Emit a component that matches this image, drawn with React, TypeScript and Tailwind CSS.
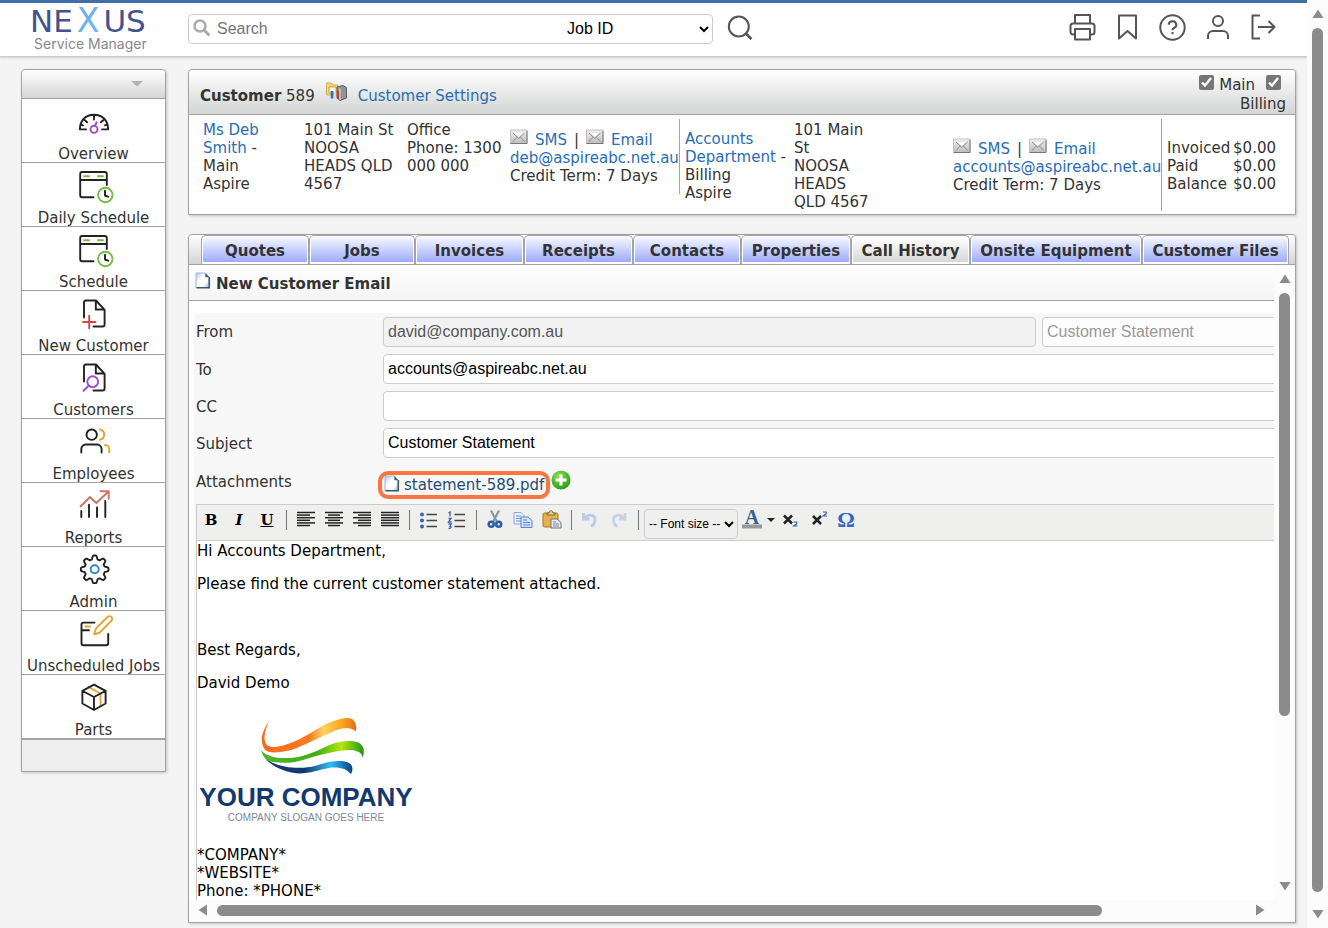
import type { ReactNode } from 'react';

const DARK = '#222';

function gearPath(cx: number, cy: number) {
  const points: string[] = [];
  for (let i = 0; i < 128; i++) {
    const a = (i / 128) * Math.PI * 2;
    const wave = Math.max(-1, Math.min(1, 1.7 * Math.cos(8 * a)));
    const r = 12 + 1.8 * wave;
    points.push(`${(cx + r * Math.cos(a)).toFixed(2)} ${(cy + r * Math.sin(a)).toFixed(2)}`);
  }
  return `M${points.join('L')}Z`;
}

function MenuSvg({ children }: { children: ReactNode }) {
  return (
    <svg aria-hidden="true" viewBox="0 0 36 40" className="h-10 w-9 overflow-visible" fill="none" stroke={DARK} strokeWidth="1.9" strokeLinecap="round" strokeLinejoin="round">
      {children}
    </svg>
  );
}

const scheduleIcon = (
  <MenuSvg>
    <path d="M17.5 31.3H6.2a2 2 0 0 1-2-2V8a2 2 0 0 1 2-2h22.6a2 2 0 0 1 2 2v11M4.2 14h26.6" />
    <path d="M8 10.2h5M22 10.2h5" stroke="#6fbf44" />
    <circle cx="29.3" cy="29" r="7.2" stroke="#6fbf44" />
    <path d="M29 24.8v4.7l3.2 1.2" />
  </MenuSvg>
);

const fileShape = 'M8 23.500V8.500a2 2 0 0 1 2-2H20L28.600 15.800V30.500a2 2 0 0 1-2 2H17.500M19.800 6.800V15.500H28.200';

const menu: { label: string; icon: ReactNode }[] = [
  {
    label: 'Overview',
    icon: (
      <MenuSvg>
        <path d="M10 27.400H3.900C3.900 18 10 12.700 18 12.700S32.100 18 32.100 27.400H26M18 13v4.500M8.500 18l2.600 2.300M27.500 18l-2.600 2.300M5 22.500l2 .8M31 22.500l-2 .8" />
        <circle cx="18" cy="27.300" r="3.500" stroke="#9c4fc4" />
        <path d="M19 23.800l1.600-3.600" stroke="#9c4fc4" />
      </MenuSvg>
    ),
  },
  { label: 'Daily Schedule', icon: scheduleIcon },
  { label: 'Schedule', icon: scheduleIcon },
  {
    label: 'New Customer',
    icon: (
      <MenuSvg>
        <path d={fileShape} />
        <path d="M7 28h12.500M13.200 21.700v12.500" stroke="#cf4a42" />
      </MenuSvg>
    ),
  },
  {
    label: 'Customers',
    icon: (
      <MenuSvg>
        <path d={fileShape} />
        <circle cx="16.700" cy="23.700" r="5.400" stroke="#9c4fc4" fill="#fff" />
        <path d="M12.700 27.800L7.500 32.800" stroke="#9c4fc4" />
      </MenuSvg>
    ),
  },
  {
    label: 'Employees',
    icon: (
      <MenuSvg>
        <circle cx="15.700" cy="12.700" r="5.200" />
        <path d="M5.300 30.500V27a4.500 4.500 0 0 1 4.500-4.500h11.300a4.500 4.500 0 0 1 4.500 4.500v3.500" />
        <path d="M24 7.500a5.200 5.200 0 0 1 0 10.200M29 23a4.600 4.600 0 0 1 4.300 4.500v3" stroke="#e5a52d" />
      </MenuSvg>
    ),
  },
  {
    label: 'Reports',
    icon: (
      <MenuSvg>
        <path d="M5.300 25v6M13 18.700V31M21 21.500V31M29.300 15v16" />
        <path d="M4.500 20.500L14 11l6.300 6L32.500 5.500M24.500 5.300h8.200v7.500" stroke="#cc7563" />
      </MenuSvg>
    ),
  },
  {
    label: 'Admin',
    icon: (
      <MenuSvg>
        <path d={gearPath(18.7, 19.3)} />
        <circle cx="18.700" cy="19.300" r="4" stroke="#2f86c9" />
      </MenuSvg>
    ),
  },
  {
    label: 'Unscheduled Jobs',
    icon: (
      <MenuSvg>
        <path d="M18.500 8.600H7.500a2 2 0 0 0-2 2V29.300a2 2 0 0 0 2 2h22.700a2 2 0 0 0 2-2V20M6 16.300h7" />
        <path d="M9.500 12.500h4.500M18.300 20.300l1.500-5.600L31.500 3a2.600 2.600 0 0 1 4 3.600L23.800 18.500z" stroke="#e5a52d" />
      </MenuSvg>
    ),
  },
  {
    label: 'Parts',
    icon: (
      <MenuSvg>
        <path d="M12.500 9L24.500 15.500V28" stroke="#e5a52d" />
        <path d="M18 6.600L29.600 12.800V25.500L18 32L6.400 25.500V12.800zM6.600 13L18 19L29.400 13M18 19v12.500" />
      </MenuSvg>
    ),
  },
];

const tabs = [
  { label: 'Quotes', size: 'basis-[108px]' },
  { label: 'Jobs', size: 'basis-[106px]' },
  { label: 'Invoices', size: 'basis-[109px]' },
  { label: 'Receipts', size: 'basis-[109px]' },
  { label: 'Contacts', size: 'basis-[108px]' },
  { label: 'Properties', size: 'basis-[110px]' },
  { label: 'Call History', size: 'basis-[119px]' },
  { label: 'Onsite Equipment', size: 'basis-[172px]' },
  { label: 'Customer Files', size: 'basis-[147px]' },
];

const linkClass = 'text-[#2a6db5]';
const card = 'border border-[#a3a3a3] shadow-[1px_1px_3px_rgba(0,0,0,0.2)]';

function Arrow({ dir }: { dir: 'up' | 'down' | 'left' | 'right' }) {
  const d = {
    up: 'M6 1.500L11.500 10H.5z',
    down: 'M6 10.500L11.500 2H.5z',
    left: 'M1.500 6L10 .5V11.500z',
    right: 'M10.500 6L2 .5V11.500z',
  }[dir];
  return (
    <svg aria-hidden="true" viewBox="0 0 12 12" className="size-3 shrink-0" fill="#8b8b8b">
      <path d={d} />
    </svg>
  );
}

function HeaderIcon({ label, children }: { label: string; children: ReactNode }) {
  return (
    <button type="button" aria-label={label} className="size-7">
      <svg viewBox="0 0 28 28" className="size-7" fill="none" stroke="#555" strokeWidth="2" strokeLinejoin="round">
        {children}
      </svg>
    </button>
  );
}

function Envelope() {
  return (
    <svg aria-hidden="true" viewBox="0 0 18 16" className="mt-[2px] h-4 w-[18px] shrink-0 self-start">
      <defs>
        <linearGradient id="envelope" x1="0" y1="0" x2="0" y2="1">
          <stop offset="0" stopColor="#f0f0f0" />
          <stop offset="1" stopColor="#bdbdbd" />
        </linearGradient>
      </defs>
      <rect x=".5" y="1" width="16.500" height="13.500" fill="url(#envelope)" stroke="#c2c2c2" />
      <path d="M.5 14.500h16.500V2" fill="none" stroke="#777" />
      <path d="M3 4l5.800 5.500L14.600 4M3 12.500l4-4.300M14.600 12.500l-4-4.300" fill="none" stroke="#8d8d8d" />
      <path d="M4.500 4l4.300 3.800L13 4z" fill="#fff" />
    </svg>
  );
}

function PageIcon() {
  return (
    <svg aria-hidden="true" viewBox="0 0 16 17" className="h-[17px] w-4 shrink-0">
      <defs>
        <linearGradient id="page" x1="0" y1="0" x2="1" y2="1">
          <stop offset="0" stopColor="#a9c3ee" />
          <stop offset=".4" stopColor="#fff" />
          <stop offset=".7" stopColor="#fff" />
          <stop offset="1" stopColor="#9fb2cc" />
        </linearGradient>
      </defs>
      <path d="M1 1h9.500L14 5v10.500H1z" fill="url(#page)" stroke="#9db4da" />
      <path d="M14.300 5v10.800H1.500" fill="none" stroke="#3b5578" strokeWidth="1.500" />
      <path d="M10.300 1v4.200h4z" fill="#3d587c" />
    </svg>
  );
}

function ContactLinks({ email }: { email: string }) {
  return (
    <div>
      <div className="flex h-[22px] items-end gap-[7px]">
        <Envelope />
        <a href="#sms" className={linkClass}>SMS</a>
        <span>|</span>
        <Envelope />
        <a href="#email" className={linkClass}>Email</a>
      </div>
      <a href="#address" className={linkClass}>{email}</a>
      <div>Credit Term: 7 Days</div>
    </div>
  );
}

function Tool({ label, children }: { label: string; children: ReactNode }) {
  return (
    <button type="button" aria-label={label} className="flex h-[30px] w-7 shrink-0 items-center justify-center">
      {children}
    </button>
  );
}

function ToolSvg({ children }: { children: ReactNode }) {
  return (
    <svg aria-hidden="true" viewBox="0 0 20 20" className="size-5 overflow-visible" fill="none">
      {children}
    </svg>
  );
}

function Separator() {
  return (
    <div className="flex h-[30px] w-[11px] shrink-0 items-center justify-center">
      <div className="h-5 w-px bg-[#777]" />
    </div>
  );
}

function AlignIcon({ starts, ends }: { starts: number[]; ends: number[] }) {
  return (
    <ToolSvg>
      {starts.map((x, i) => (
        <path key={i} d={`M${x} ${2.500 + i * 2.600}H${ends[i]}`} stroke="#222" strokeWidth="1.500" />
      ))}
    </ToolSvg>
  );
}

const inputClass = 'h-[30px] min-w-0 rounded border border-[#ccc] px-1 font-["Liberation_Sans",Arial,sans-serif] text-base';

function Field({ id, label, value }: { id: string; label: string; value: string }) {
  return (
    <div className="flex h-[37px] items-center">
      <label htmlFor={id} className="w-[187px] shrink-0 pt-[2px]">{label}</label>
      <input id={id} defaultValue={value} className={`${inputClass} flex-1 bg-white text-black`} />
    </div>
  );
}

function CompanyLogo() {
  return (
    <svg role="img" aria-label="Your Company" viewBox="0 0 220 120" className="h-[120px] w-[220px]">
      <defs>
        <linearGradient id="orange">
          <stop offset="0" stopColor="#f26a1b" />
          <stop offset=".5" stopColor="#fa7a20" />
          <stop offset=".65" stopColor="#ffd060" />
          <stop offset=".85" stopColor="#f7a51e" />
          <stop offset="1" stopColor="#ee6a16" />
        </linearGradient>
        <linearGradient id="green">
          <stop offset="0" stopColor="#4fb626" />
          <stop offset=".55" stopColor="#3fae16" />
          <stop offset=".78" stopColor="#b7e60e" />
          <stop offset="1" stopColor="#1f9619" />
        </linearGradient>
        <linearGradient id="blue">
          <stop offset="0" stopColor="#1d3c78" />
          <stop offset=".45" stopColor="#12356f" />
          <stop offset=".75" stopColor="#2bc0f5" />
          <stop offset="1" stopColor="#0c3f86" />
        </linearGradient>
      </defs>
      <path d="M72 17C66 26 64 33 65 38C66 45 69 48.500 77 48.500C88 48 96 46 104 42C116 37 125 32 134 28.500C142 25 150 21 159 27.500C160 21 158 17 155 15C151 13 146 14 140 16C124 20 112 32 96 38C86 42 74 46 69 40C66 35 68 26 72 17Z" fill="url(#orange)" />
      <path d="M64 46C66 53 69 57 76 58C86 59.500 96 59 106 56C116 53 124 50 134 48.500C144 46.500 154 45 159 47C163 48 165 50 165.500 53.500C169 46 166 39 158 37.500C148 36 138 38 128 43C116 49 104 53.500 92 54C80 54.500 70 53 64 46Z" fill="url(#green)" />
      <path d="M68 54.500C76 63 88 68.500 102 69.500C114 69.500 122 65.500 132 64C142 62.500 149 64.500 154 70C157 64 155.500 59 148 57.500C138 56 128 58.500 118 62C106 65 84 65.500 68 54.500Z" fill="url(#blue)" />
      <text x="109" y="102" textAnchor="middle" className="font-['Liberation_Sans',Arial,sans-serif] text-[26px] font-bold" fill="#123a70">YOUR COMPANY</text>
      <text x="109" y="117" textAnchor="middle" className="font-['Liberation_Sans',Arial,sans-serif] text-[10px]" fill="#7f8898">COMPANY SLOGAN GOES HERE</text>
    </svg>
  );
}

export default function App() {
  return (
    <div className="flex h-screen overflow-hidden bg-[#f4f4f4] font-['DejaVu_Sans',Verdana,sans-serif] text-[15px] leading-[18px] text-[#333]">
      <div className="flex min-w-0 flex-1 flex-col">
        <header className="flex h-[57px] shrink-0 items-center border-t-[3px] border-b border-t-[#416ea5] border-b-[#ccc] bg-white pr-[31px] pb-[2px] pl-[30px] shadow-[0_1px_2px_rgba(0,0,0,0.15)]">
          <a href="#home" aria-label="Nexus Service Manager" className="flex w-[158px] shrink-0 flex-col">
            <span className="flex items-baseline gap-1 text-[31px] leading-[30px] text-[#43538f]">
              NE<span className="text-[33px] leading-[30px] text-[#6cb2f0]">X</span>US
            </span>
            <span className="pl-1 font-['Inter',sans-serif] text-sm leading-4 text-[#888]">Service Manager</span>
          </a>
          <form className="flex h-[30px] w-[525px] items-center rounded border border-[#ccc] bg-white pl-1 font-['Liberation_Sans',Arial,sans-serif] text-base">
            <svg aria-hidden="true" viewBox="0 0 18 18" className="mb-px size-[18px] shrink-0" fill="none" stroke="#aaa">
              <circle cx="7" cy="7" r="5.500" strokeWidth="2.500" />
              <path d="M11.300 11.300L16.500 16.500" strokeWidth="3" />
            </svg>
            <input aria-label="Search" placeholder="Search" className="ml-1.5 min-w-0 flex-1 outline-none placeholder:text-[#757575]" />
            <select aria-label="Search field" className="h-7 w-[149px] text-black">
              <option>Job ID</option>
            </select>
          </form>
          <button type="button" aria-label="Search" className="mb-[2px] ml-[13px] size-7">
            <svg viewBox="0 0 28 28" className="size-7" fill="none" stroke="#555" strokeWidth="2">
              <circle cx="12.800" cy="12.500" r="10" />
              <path d="M19.800 19.500L25.500 25" strokeWidth="2.500" />
            </svg>
          </button>
          <nav aria-label="Account" className="mb-1 ml-auto flex gap-[17px]">
            <HeaderIcon label="Print">
              <path d="M7 10V2h15v8M7 21.500H5a2.500 2.500 0 0 1-2.500-2.500v-6A2.500 2.500 0 0 1 5 10.500h19a2.500 2.500 0 0 1 2.500 2.500v6a2.500 2.500 0 0 1-2.500 2.500h-2M7 16h15v10.500H7z" />
            </HeaderIcon>
            <HeaderIcon label="Bookmarks">
              <path d="M6 2.500h17v23L14.500 18L6 25.500z" />
            </HeaderIcon>
            <HeaderIcon label="Help">
              <circle cx="14.500" cy="14.500" r="12.200" />
              <path d="M10.700 11.800a3.800 3.500 0 1 1 5.200 3.200c-1 .5-1.400 1-1.400 2.200M14.500 19v2.300" />
            </HeaderIcon>
            <HeaderIcon label="Profile">
              <circle cx="15" cy="8" r="5" />
              <path d="M5 26v-3a5 5 0 0 1 5-5h10a5 5 0 0 1 5 5v3" />
            </HeaderIcon>
            <HeaderIcon label="Log out">
              <path d="M12 2.500H4.500v23H12M10 14h16.500M20.500 8l6 6l-6 6" />
            </HeaderIcon>
          </nav>
        </header>

        <div className="flex min-h-0 flex-1 items-start gap-[22px] pt-3 pr-[11px] pb-[5px] pl-[21px]">
          <nav aria-label="Main menu" className={`${card} w-[145px] shrink-0 rounded-t bg-white`}>
            <button type="button" aria-label="Collapse menu" className="flex h-[29px] w-full items-center justify-end rounded-t border-b border-[#a3a3a3] bg-linear-to-b from-white to-[#d3d6d4] pr-[22px]">
              <svg viewBox="0 0 12 6" className="h-1.5 w-3" fill="#b3b3b3">
                <path d="M0 0h12L6 5.500z" />
              </svg>
            </button>
            {menu.map((item) => (
              <a key={item.label} href="#menu" className="flex h-16 flex-col items-center gap-[3px] border-b border-[#a3a3a3] pt-[3px] whitespace-nowrap">
                {item.icon}
                {item.label}
              </a>
            ))}
            <div className="h-8 border-t border-[#a3a3a3] bg-[#eee]" />
          </nav>

          <main className="flex h-full min-w-0 flex-1 flex-col gap-[19px]">
            <section className={`${card} rounded-t bg-white`}>
              <div className="flex h-[45px] items-start rounded-t border-b border-[#a3a3a3] bg-linear-to-b from-white to-[#d3d6d4] pr-[9px] pl-[11px]">
                <h1 className="mt-[17px]"><b>Customer</b> 589</h1>
                <svg aria-hidden="true" viewBox="0 0 21 19" className="mt-3 ml-[11px] h-[19px] w-[21px]">
                  <path d="M.5 1h5l1.500 2h5v10H.5z" fill="#f4d47c" stroke="#d9ae4b" />
                  <path d="M3 5h7v6H3z" fill="#fbf3d8" stroke="#9b8a60" strokeWidth=".7" />
                  <path d="M11 5l6-1.500l3.500 2V16L14 18.500L11 16z" fill="#8f9399" stroke="#5a5d62" />
                  <path d="M14 6.500V18" stroke="#e8e8ea" />
                  <path d="M6 9v7.500" stroke="#2f6fb5" strokeWidth="2.500" />
                  <path d="M9 10v7" stroke="#d8dde3" strokeWidth="2" />
                  <path d="M12 9v8" stroke="#cf3b1d" strokeWidth="2" />
                </svg>
                <a href="#settings" className={`${linkClass} mt-[17px] ml-[11px]`}>Customer Settings</a>
                <div className="ml-auto flex flex-col items-end pt-1.5 leading-[19px]">
                  <div className="flex h-[19px] items-center gap-[5px] pr-[5px]">
                    <input id="main" type="checkbox" defaultChecked className="mb-1.5 size-[15px] accent-[#767676]" />
                    <label htmlFor="main">Main</label>
                    <input id="billing" type="checkbox" defaultChecked className="mb-1.5 ml-1.5 size-[15px] accent-[#767676]" />
                  </div>
                  <label htmlFor="billing">Billing</label>
                </div>
              </div>
              <div className="flex h-[99px] items-start py-1 pr-[19px] pl-3.5">
                <div className="flex h-[75px] shrink-0 border-r border-[#a3a3a3] whitespace-nowrap">
                  <div className="w-[101px] pt-[2px]">
                    <a href="#contact" className={linkClass}>Ms Deb<br />Smith</a> -<br />Main<br />Aspire
                  </div>
                  <div className="w-[103px] pt-[2px]">101 Main St<br />NOOSA<br />HEADS QLD<br />4567</div>
                  <div className="w-[103px] pt-[2px]">Office<br />Phone: 1300<br />000 000</div>
                  <div className="w-[169px] pt-2"><ContactLinks email="deb@aspireabc.net.au" /></div>
                </div>
                <div className="flex h-[92px] min-w-0 flex-1 border-r border-[#a3a3a3] pl-[5px] whitespace-nowrap">
                  <div className="w-[109px] shrink-0 pt-[11px]">
                    <a href="#accounts" className={linkClass}>Accounts<br />Department</a> -<br />Billing<br />Aspire
                  </div>
                  <div className="pt-[2px]">101 Main<br />St<br />NOOSA<br />HEADS<br />QLD 4567</div>
                  <div className="ml-auto w-[208px] shrink-0 pt-[17px]"><ContactLinks email="accounts@aspireabc.net.au" /></div>
                </div>
                <table className="mt-5 ml-[5px]">
                  <tbody>
                    {['Invoiced', 'Paid', 'Balance'].map((name) => (
                      <tr key={name}>
                        <th scope="row" className="w-[66px] p-0 text-left font-normal">{name}</th>
                        <td className="p-0">$0.00</td>
                      </tr>
                    ))}
                  </tbody>
                </table>
              </div>
            </section>

            <section className={`${card} flex min-h-0 flex-1 flex-col rounded-t bg-white`}>
              <div role="tablist" className="flex h-[30px] shrink-0 rounded-t border-b border-[#a3a3a3] bg-linear-to-b from-white to-[#d3d6d4] pr-1.5 pl-3">
                {tabs.map((tab) => (
                  <button
                    key={tab.label}
                    type="button"
                    role="tab"
                    aria-selected={tab.label === 'Call History'}
                    className={`${tab.size} grow rounded-t-[5px] border border-b-0 border-[#a3a3a3] bg-white p-px pb-[2px] font-bold whitespace-nowrap`}
                  >
                    <span className={`flex h-full items-center justify-center rounded-t bg-linear-to-b pt-[2px] ${tab.label === 'Call History' ? 'from-white to-[#d6d8d6]' : 'from-[#f6f7ff] to-[#9fabff]'}`}>
                      {tab.label}
                    </span>
                  </button>
                ))}
              </div>
              <div className="flex min-h-0 flex-1">
                <div className="flex min-w-0 flex-1 flex-col overflow-hidden">
                  <h2 className="flex h-9 shrink-0 items-center gap-[5px] border-b border-[#a3a3a3] bg-linear-to-b from-white to-[#f4f4f4] pt-[2px] pl-1.5 font-bold">
                    <span className="pb-1.5"><PageIcon /></span>New Customer Email
                  </h2>
                  <div className="mt-3 ml-[5px] flex min-h-0 w-[120%] flex-1 flex-col bg-[#f7f7f7] pl-[2px]">
                    <div className="flex h-[37px] items-center">
                      <label htmlFor="from" className="w-[187px] shrink-0">From</label>
                      <input id="from" readOnly value="david@company.com.au" className={`${inputClass} w-[653px] bg-[#f2f2f2] text-[#555]`} />
                      <input aria-label="Template" disabled value="Customer Statement" className={`${inputClass} ml-1.5 flex-1 bg-[#fdfdfd] text-[#999]`} />
                    </div>
                    <Field id="to" label="To" value="accounts@aspireabc.net.au" />
                    <Field id="cc" label="CC" value="" />
                    <Field id="subject" label="Subject" value="Customer Statement" />
                    <div className="flex h-[43px] items-center pt-1">
                      <span className="w-[182px] shrink-0 pb-[5px]">Attachments</span>
                      <a href="#statement" className="flex h-7 items-center gap-1 rounded-[10px] border-4 border-[#fb7541] pr-[2px] pl-[2px] text-[#1f4e79]">
                        <span className="pb-[3px]"><PageIcon /></span>statement-589.pdf
                      </a>
                      <button type="button" aria-label="Add attachment" className="mb-2.5 ml-px">
                        <svg viewBox="0 0 20 20" className="size-5">
                          <defs>
                            <radialGradient id="add" cx=".4" cy=".3" r=".75">
                              <stop offset="0" stopColor="#8fdf52" />
                              <stop offset="1" stopColor="#1f9c10" />
                            </radialGradient>
                          </defs>
                          <circle cx="10" cy="10" r="9.500" fill="url(#add)" />
                          <path d="M10 4.500v11M4.500 10h11" stroke="#fff" strokeWidth="3" />
                        </svg>
                      </button>
                    </div>
                    <div className="flex h-[37px] shrink-0 items-start border border-[#ccc] bg-[#efefee]">
                      <Tool label="Bold"><span className="font-['DejaVu_Serif',serif] text-[15px] font-bold text-black">B</span></Tool>
                      <Tool label="Italic"><span className="font-['DejaVu_Serif',serif] text-[15px] font-bold text-black italic">I</span></Tool>
                      <Tool label="Underline"><span className="font-['DejaVu_Serif',serif] text-[15px] font-bold text-black underline">U</span></Tool>
                      <Separator />
                      <Tool label="Align left"><AlignIcon starts={[1, 1, 1, 1, 1, 1]} ends={[19, 14, 19, 14, 19, 14]} /></Tool>
                      <Tool label="Align center"><AlignIcon starts={[1, 4, 1, 4, 1, 4]} ends={[19, 16, 19, 16, 19, 16]} /></Tool>
                      <Tool label="Align right"><AlignIcon starts={[1, 6, 1, 6, 1, 6]} ends={[19, 19, 19, 19, 19, 19]} /></Tool>
                      <Tool label="Justify"><AlignIcon starts={[1, 1, 1, 1, 1, 1]} ends={[19, 19, 19, 19, 19, 19]} /></Tool>
                      <Separator />
                      <Tool label="Bulleted list">
                        <ToolSvg>
                          <path d="M7.500 4.500H18M7.500 10.500H18M7.500 16.500H18" stroke="#444" strokeWidth="1.300" />
                          <g fill="#3c63b0"><circle cx="3" cy="4.500" r="2" /><circle cx="3" cy="10.500" r="2" /><circle cx="3" cy="16.500" r="2" /></g>
                        </ToolSvg>
                      </Tool>
                      <Tool label="Numbered list">
                        <ToolSvg>
                          <path d="M7.500 4.500H18M7.500 10.500H18M7.500 16.500H18" stroke="#444" strokeWidth="1.300" />
                          <path d="M1.500 3l1.500-1v4.500M1.500 8.500h2.500l-2.500 3.500h3M1.500 14h2.800l-1.300 2c2 .3 1.500 2.500-1.500 2.500" stroke="#3c63b0" strokeWidth="1.300" />
                        </ToolSvg>
                      </Tool>
                      <Separator />
                      <Tool label="Cut">
                        <ToolSvg>
                          <path d="M5 .5l6 11.500M13 .5l-6 11.500" stroke="#8a96a8" strokeWidth="2.200" />
                          <circle cx="5.200" cy="14.300" r="2.500" stroke="#2e5da8" strokeWidth="2.600" />
                          <circle cx="12.700" cy="14.300" r="2.500" stroke="#2e5da8" strokeWidth="2.600" />
                        </ToolSvg>
                      </Tool>
                      <Tool label="Copy">
                        <ToolSvg>
                          <path d="M0 2.500h7l3 3v8.500H0z" fill="#e8f0ff" stroke="#8aa9e0" />
                          <path d="M2 6h5M2 8.500h5M2 11h5" stroke="#6f93d6" />
                          <path d="M7 7h7l4 3.500V17.500H7z" fill="#d5e3fd" stroke="#5b82cb" />
                          <path d="M9 10h4M9 12.500h7M9 15h7" stroke="#5b82cb" />
                        </ToolSvg>
                      </Tool>
                      <Tool label="Paste">
                        <ToolSvg>
                          <rect x="1" y="3" width="15" height="14" rx="1.500" fill="#e5b148" stroke="#a9791f" />
                          <path d="M5 5V3h2c0-3 4-3 4 0h2v2z" fill="#d9d0a8" stroke="#7d6a33" />
                          <path d="M9 9h6l4 3.500V18H9z" fill="#e4e9f2" stroke="#6c7787" />
                          <path d="M11 12h3M11 14h6M11 16h6" stroke="#7f8ba0" />
                        </ToolSvg>
                      </Tool>
                      <Separator />
                      <Tool label="Undo">
                        <ToolSvg><path d="M2.500 3v6h6M3.500 8.500C8 3 14.500 5 14 10.500c-.3 3-2 5-4 6" stroke="#bccbe5" strokeWidth="2.800" /></ToolSvg>
                      </Tool>
                      <Tool label="Redo">
                        <ToolSvg><path d="M16 3v6h-6M15 8.500C10.500 3 4 5 4.500 10.500c.3 3 2 5 4 6" stroke="#c3d4e3" strokeWidth="2.800" /></ToolSvg>
                      </Tool>
                      <Separator />
                      <select aria-label="Font size" className="mt-1 h-[30px] w-[94px] shrink-0 rounded border border-[#ccc] font-['Liberation_Sans',Arial,sans-serif] text-xs text-black">
                        <option>-- Font size --</option>
                      </select>
                      <Tool label="Text color">
                        <ToolSvg>
                          <text x="10" y="14" textAnchor="middle" className="font-['Liberation_Serif',serif] text-[20px] font-bold" fill="#3c5f9e">A</text>
                          <path d="M0 16.500h20" stroke="#999" strokeWidth="4" />
                        </ToolSvg>
                      </Tool>
                      <button type="button" aria-label="Choose text color" className="flex h-[30px] w-2.5 items-center justify-center">
                        <svg viewBox="0 0 8 4" className="h-1 w-2 shrink-0"><path d="M0 0h8L4 4z" fill="#222" /></svg>
                      </button>
                      <Tool label="Subscript">
                        <ToolSvg>
                          <path d="M4 5.500l8 8M12 5.500l-8 8" stroke="#222" strokeWidth="2.500" />
                          <path d="M13.500 12h3.200v1.700l-3 2.300h3.800" stroke="#3a62b5" strokeWidth="1.200" />
                        </ToolSvg>
                      </Tool>
                      <Tool label="Superscript">
                        <ToolSvg>
                          <path d="M5 6l8 8M13 6l-8 8" stroke="#222" strokeWidth="2.500" />
                          <path d="M15 2h3.200v1.700l-3 2.300h3.800" stroke="#3a62b5" strokeWidth="1.200" />
                        </ToolSvg>
                      </Tool>
                      <Tool label="Special character"><span className="font-['Liberation_Serif',serif] text-[22px] font-bold text-[#3565c8]">Ω</span></Tool>
                    </div>
                    <div className="min-h-0 flex-1 overflow-hidden border-l border-[#ccc] bg-white pt-px text-black">
                      <p className="mb-[15px]">Hi Accounts Department,</p>
                      <p className="mb-12">Please find the current customer statement attached.</p>
                      <p className="mb-[15px]">Best Regards,</p>
                      <p className="mb-3">David Demo</p>
                      <CompanyLogo />
                      <p className="mt-[22px]">*COMPANY*<br />*WEBSITE*<br />Phone: *PHONE*</p>
                    </div>
                  </div>
                  <div aria-hidden="true" className="flex h-[22px] shrink-0 items-center gap-2 bg-[#fcfcfc] px-2 pb-[2px]">
                    <Arrow dir="left" />
                    <div className="flex-1">
                      <div className="h-[11px] w-[86%] rounded-full bg-[#8b8b8b]" />
                    </div>
                    <Arrow dir="right" />
                  </div>
                </div>
                <div aria-hidden="true" className="flex w-[21px] shrink-0 flex-col items-center gap-2 bg-[#fcfcfc] pt-2 pb-[30px]">
                  <Arrow dir="up" />
                  <div className="flex-1">
                    <div className="h-[73%] w-[11px] rounded-full bg-[#8b8b8b]" />
                  </div>
                  <Arrow dir="down" />
                </div>
              </div>
            </section>
          </main>
        </div>
      </div>
      <div aria-hidden="true" className="flex w-[21px] shrink-0 flex-col items-center gap-2 bg-[#fcfcfc] py-2">
        <Arrow dir="up" />
        <div className="mb-2 w-[11px] flex-1 rounded-full bg-[#8b8b8b]" />
        <Arrow dir="down" />
      </div>
    </div>
  );
}
